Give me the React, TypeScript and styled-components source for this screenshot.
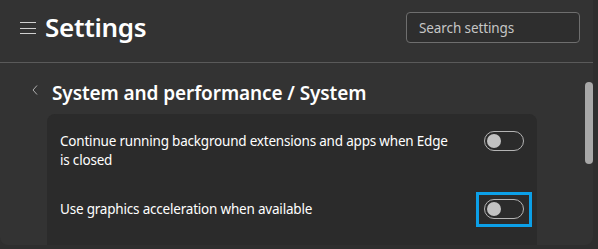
import React from "react";
import styled, { createGlobalStyle } from "styled-components";

const Global = createGlobalStyle`
  html, body { margin: 0; padding: 0; background: #2e2e2e; }
  body { font-family: "Segoe UI", "Noto Sans", "Open Sans", sans-serif; color: #fff; }
  * { box-sizing: border-box; }
`;

const Window = styled.div`
  position: relative;
  width: 593px;
  height: 245px;
  background: #333333;
  border-radius: 0 0 8px 8px;
  overflow: hidden;
`;

const Header = styled.header`
  height: 63px;
  display: flex;
  align-items: center;
  padding: 0 13px 0 20px;
  border-bottom: 1px solid #5a5a5a;
`;

const Menu = styled.div`
  width: 16px;
  height: 12px;
  display: flex;
  flex-direction: column;
  justify-content: space-between;
  margin-top: -6px;
  span { display: block; height: 1px; background: #d0d0d0; }
`;

const Title = styled.h1`
  margin: -8px 0 0 9px;
  font-size: 26px;
  font-weight: 600;
  letter-spacing: -0.3px;
  flex: 1;
`;

const Search = styled.div`
  width: 174px;
  height: 31px;
  margin-top: -7px;
  border: 1px solid #6e6e6e;
  border-radius: 4px;
  background: #2e2e2e;
  display: flex;
  align-items: center;
  padding-left: 12px;
  font-size: 13.5px;
  letter-spacing: -0.1px;
  color: #c6c6c6;
`;

const Content = styled.main`
  padding: 14px 0 0 47px;
`;

const Crumb = styled.div`
  display: flex;
  align-items: center;
  height: 32px;
  margin-left: -15px;
`;

const Back = styled.span`
  width: 6px;
  display: flex;
  margin-top: -6px;
  margin-right: 14px;
`;

const Heading = styled.h2`
  margin: 0;
  font-size: 19px;
  font-weight: 600;
  letter-spacing: -0.1px;
`;

const Card = styled.section`
  margin-top: 5px;
  width: 490px;
  height: 140px;
  background: #2b2b2b;
  border-radius: 8px 8px 0 0;
`;

const Row = styled.div<{ $top: number }>`
  display: flex;
  justify-content: space-between;
  align-items: flex-start;
  padding: ${(p) => p.$top}px 13px 0;
`;

const Label = styled.div`
  max-width: 400px;
  font-size: 13.5px;
  letter-spacing: -0.2px;
  line-height: 19px;
  color: #ffffff;
`;

const Toggle = styled.div`
  width: 40px;
  height: 20px;
  margin-top: -1px;
  border: 1px solid #b4b4b4;
  border-radius: 10px;
  display: flex;
  align-items: center;
  padding-left: 2px;
  flex-shrink: 0;
  span { width: 14px; height: 14px; border-radius: 50%; background: #c2c2c2; }
`;

const FocusRing = styled.div`
  margin: -8px -8px 0 0;
  padding: 5px;
  border: 3px solid #0ca0e8;
  flex-shrink: 0;
  display: flex;
`;

const Thumb = styled.div`
  position: absolute;
  top: 82px;
  right: 0;
  width: 8px;
  height: 82px;
  border-radius: 4px;
  background: #a8a8a8;
`;

export default function App() {
  return (
    <>
      <Global />
      <Window>
        <Header>
          <Menu><span /><span /><span /></Menu>
          <Title>Settings</Title>
          <Search>Search settings</Search>
        </Header>
        <Content>
          <Crumb>
            <Back>
              <svg width="6" height="10" viewBox="0 0 6 10"><path d="M5 0.5 L1 5 L5 9.5" stroke="#b0b0b0" strokeWidth="1" fill="none" /></svg>
            </Back>
            <Heading>System and performance / System</Heading>
          </Crumb>
          <Card>
            <Row $top={18}>
              <Label>Continue running background extensions and apps when Edge is closed</Label>
              <Toggle><span /></Toggle>
            </Row>
            <Row $top={30}>
              <Label>Use graphics acceleration when available</Label>
              <FocusRing>
                <Toggle><span /></Toggle>
              </FocusRing>
            </Row>
          </Card>
        </Content>
        <Thumb />
      </Window>
    </>
  );
}
